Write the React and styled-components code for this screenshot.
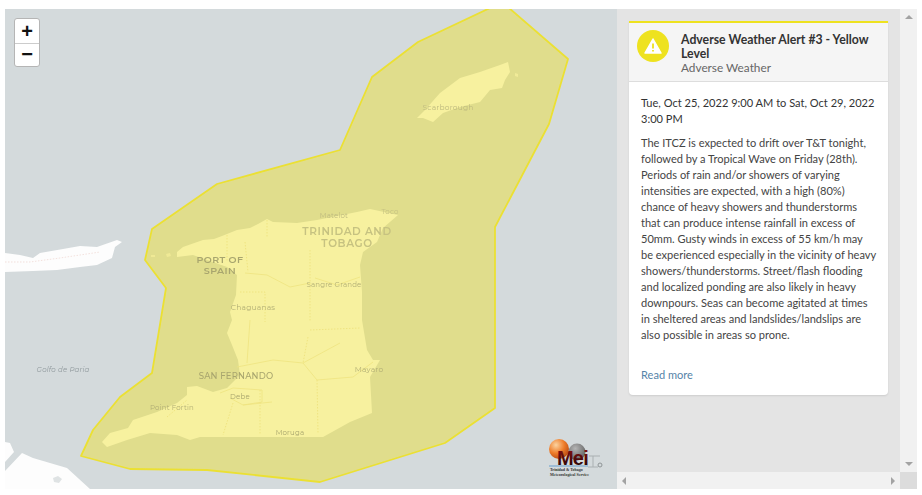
import React from 'react';
import styled, { createGlobalStyle } from 'styled-components';

const GlobalStyle = createGlobalStyle`
  html, body { margin: 0; padding: 0; background: #fff; }
  body { font-family: Lato, "Open Sans", sans-serif; overflow: hidden; }
`;

const Frame = styled.div`
  display: grid;
  grid-template-columns: 612px 300px;
  width: 912px;
  height: 480px;
  margin: 9px 0 0 5px;
`;

const MapArea = styled.div`
  position: relative;
  overflow: hidden;
  background: #d4dadc;
`;

const MapLayer = styled.svg`
  position: absolute;
  inset: 0;
  width: 612px;
  height: 480px;
  filter: blur(${p => p.$blur || 0}px);
`;

const Zoom = styled.div`
  position: absolute;
  top: 9px;
  left: 9px;
  width: 24px;
  border: 1px solid #b5b5b5;
  border-radius: 3px;
  overflow: hidden;
  background: #fff;
`;

const ZoomButton = styled.div`
  display: flex;
  align-items: center;
  justify-content: center;
  height: 24px;
  box-sizing: border-box;
  font: bold 20px "Liberation Sans", sans-serif;
  color: #111;
  & + & {
    height: 23px;
    padding-bottom: 2px;
    border-top: 1px solid #ccc;
  }
`;

const Label = styled.div`
  position: absolute;
  left: ${p => p.$x}px;
  top: ${p => p.$y}px;
  transform: translateX(-50%);
  text-align: center;
  white-space: nowrap;
  font-family: Montserrat, "Open Sans", sans-serif;
  font-size: ${p => p.$size || 8}px;
  line-height: ${p => p.$leading || (p.$size || 8) + 1}px;
  font-style: ${p => (p.$italic ? 'italic' : 'normal')};
  font-weight: ${p => p.$weight || 400};
  letter-spacing: ${p => p.$spacing || 0.2}px;
  color: ${p => p.$color || '#b9b67e'};
  filter: blur(0.25px);
`;

const LogoBox = styled.svg`
  position: absolute;
  left: 543px;
  top: 429px;
  width: 60px;
  height: 44px;
`;

const LogoWord = styled.text`
  font: 900 20px "Liberation Sans", sans-serif;
  letter-spacing: -0.8px;
`;

const LogoCaption = styled.text`
  font: bold 4px "Liberation Serif", serif;
  fill: #333;
`;

const Panel = styled.div`
  display: grid;
  grid-template-columns: 283px 17px;
  grid-template-rows: 463px 17px;
`;

const PanelBody = styled.div`
  background: #e4e4e4;
  padding: 12px 12px 0;
`;

const Card = styled.div`
  width: 259px;
  height: 374px;
  display: flex;
  flex-direction: column;
  box-sizing: border-box;
  background: #fff;
  border-top: 2px solid #eee21f;
  border-radius: 0 0 4px 4px;
  box-shadow: 0 1px 2px rgba(0, 0, 0, 0.1);
`;

const CardHeader = styled.div`
  flex: none;
  display: flex;
  gap: 12px;
  height: 59px;
  box-sizing: border-box;
  padding: 7px 8px 0;
  background: #f5f5f5;
  border-bottom: 1px solid #ddd;
`;

const AlertBadge = styled.div`
  flex: none;
  display: flex;
  align-items: center;
  justify-content: center;
  width: 32px;
  height: 32px;
  border-radius: 50%;
  background: #eee21f;
`;

const HeaderText = styled.div`
  padding-top: 3px;
  font-size: 11.8px;
  line-height: 14px;
  color: #666;
`;

const Title = styled.div`
  font-size: 12.25px;
  font-weight: 700;
  color: #333;
`;

const CardBody = styled.div`
  flex: 1;
  display: flex;
  flex-direction: column;
  padding: 13px 12px 0;
  font-size: 11.05px;
  line-height: 16px;
  color: #333;
`;

const Dates = styled.div`
  margin-bottom: 8px;
`;

const Description = styled.div`
  color: #444;
`;

const ReadMore = styled.a`
  margin-top: 24px;
  color: #5583a8;
`;

const Track = styled.div`
  display: flex;
  flex-direction: ${p => (p.$vertical ? 'column' : 'row')};
  align-items: center;
  justify-content: space-between;
  padding: ${p => (p.$vertical ? '6px 0' : '0 5px')};
  background: #f1f1f1;
`;

const Corner = styled.div`
  background: #dcdcdc;
`;

const Arrow = styled.span`
  width: 0;
  height: 0;
  border-style: solid;
  border-color: transparent;
  ${p => {
    if (p.$dir === 'up') return 'border-width: 0 4px 4px; border-bottom-color: #a3a3a3;';
    if (p.$dir === 'down') return 'border-width: 4px 4px 0; border-top-color: #a3a3a3;';
    if (p.$dir === 'left') return 'border-width: 4px 4px 4px 0; border-right-color: #a3a3a3;';
    return 'border-width: 4px 0 4px 4px; border-left-color: #a3a3a3;';
  }}
`;

// map drawings use page coordinates, the svg viewBox shifts them into the map area
const warningArea = '490,8 509,8 568,59 549,124 495,227 495,408 445,443 320,482 207,470 130,469 81,456 93,430 120,397 152,373 166,288 145,260 152,229 217,184 340,150 372,77 418,42';
const trinidad = 'M177,252 L183,247 L203,240 L214,239 L222,236 L237,230 L250,228 L258,224 L267,219 L273,222 L297,223 L317,220 L337,216 L357,212 L370,209 L398,215 L383,228 L377,242 L363,252 L360,265 L362,292 L362,320 L367,350 L373,360 L380,360 L370,377 L372,413 L350,422 L323,437 L277,437 L223,437 L200,437 L190,440 L177,435 L150,433 L127,440 L107,447 L102,442 L110,433 L128,428 L133,420 L157,412 L177,403 L187,395 L187,387 L197,386 L213,392 L227,388 L240,375 L238,360 L232,345 L227,333 L232,320 L230,312 L236,295 L237,275 L227,267 L193,255 L177,257 Z';
const tobago = 'M417,118 L425,110 L440,93 L460,78 L480,72 L500,65 L508,62 L510,72 L505,80 L502,88 L490,90 L480,102 L460,107 L443,113 L433,122 L423,118 Z';
const paria = 'M5,253 L20,255 L33,258 L40,253 L63,249 L80,246 L97,247 L117,240 L122,242 L115,247 L112,258 L97,265 L80,267 L57,270 L33,271 L5,272 Z';
const mainland = 'M5,442 L10,443 L14,452 L5,462 Z M5,471 L22,453 L33,458 L67,468 L90,489 L5,489 Z';
const solidRoads = [
  'M245,273 L267,275 L290,287 L310,283',
  'M315,278 L337,285 L360,277',
  'M250,320 L247,363',
  'M237,367 L273,360 L303,363 L340,343',
  'M303,363 L317,380 L353,377 L373,362',
  'M220,393 L233,388 L262,390 L262,402 L243,405 L230,398',
  'M243,405 L272,402',
];
const dottedRoads = [
  'M227,235 L227,262',
  'M267,220 L267,238',
  'M245,242 L248,272',
  'M310,250 L310,322',
  'M240,292 L265,292 L265,322',
  'M308,337 L303,363',
  'M310,330 L360,328',
  'M317,380 L318,433',
  'M260,390 L260,435',
  'M233,403 L223,435',
  'M167,417 L187,400',
];

const App = () => (
  <>
    <GlobalStyle />
    <Frame>
      <MapArea>
        <MapLayer viewBox="5 9 612 480" $blur={0.6}>
          <path d={paria} fill="#fdfdfd" />
          <path d={mainland} fill="#fdfdfd" />
          <path d="M53,478 l5,-2 l4,3 l-3,4 l-5,-1 Z" fill="#dfe3e4" />
          <path d={trinidad} fill="#fff" />
          <path d={tobago} fill="#fff" />
          <path d="M515,73 l3,1 l0,3 l-3,-1 Z" fill="#f4f4f2" />
          <path d="M151,255 l4,0 l0,2 l-4,0 Z M166,254 l4,-1 l1,3 l-4,1 Z" fill="#f0f0ec" />
          <path d="M5,262 H30 L60,258 L100,252" fill="none" stroke="#eccfc8" strokeWidth="0.6" strokeDasharray="1.5 1.5" />
          {solidRoads.map(d => (
            <path key={d} d={d} fill="none" stroke="#efe6c4" strokeWidth="0.8" />
          ))}
          {dottedRoads.map(d => (
            <path key={d} d={d} fill="none" stroke="#ecdfb8" strokeWidth="0.8" strokeDasharray="1.5 1.5" />
          ))}
        </MapLayer>
        <MapLayer viewBox="5 9 612 480">
          <polygon points={warningArea} fill="rgb(238,226,50)" fillOpacity="0.47" stroke="#ebe033" strokeWidth="1.8" strokeLinejoin="round" />
        </MapLayer>
        <Label $x={443} $y={95} $size={7.5} $color="#bdb97f">Scarborough</Label>
        <Label $x={329} $y={203} $size={7} $color="#bdb97f">Matelot</Label>
        <Label $x={385} $y={199} $size={7} $color="#c6c281">Toco</Label>
        <Label $x={342} $y={217} $size={10.5} $leading={12.3} $color="#c6c281" $weight={600} $spacing={0.6}>TRINIDAD AND<br />TOBAGO</Label>
        <Label $x={215} $y={245} $size={9.5} $leading={11} $color="#a8a56e" $weight={600} $spacing={0.4}>PORT OF<br />SPAIN</Label>
        <Label $x={329} $y={272} $size={7} $color="#b1ae75">Sangre Grande</Label>
        <Label $x={248} $y={295} $size={7.5} $color="#b1ae75">Chaguanas</Label>
        <Label $x={58} $y={357} $size={7} $color="#8f989c" $italic>Golfo de Paria</Label>
        <Label $x={231} $y={363} $size={8.5} $color="#a8a56e" $weight={500}>SAN FERNANDO</Label>
        <Label $x={235} $y={384} $size={7} $color="#a8a56e">Debe</Label>
        <Label $x={167} $y={395} $size={7} $color="#b1ae75">Point Fortin</Label>
        <Label $x={285} $y={420} $size={7} $color="#a8a56e">Moruga</Label>
        <Label $x={364} $y={357} $size={7.5} $color="#b1ae75">Mayaro</Label>
        <Zoom>
          <ZoomButton>+</ZoomButton>
          <ZoomButton>−</ZoomButton>
        </Zoom>
        <LogoBox viewBox="0 0 60 44">
          <defs>
            <radialGradient id="orangeBall" cx="35%" cy="30%" r="75%">
              <stop offset="0%" stopColor="#fbd3a0" />
              <stop offset="55%" stopColor="#ee7d2a" />
              <stop offset="100%" stopColor="#b84a12" />
            </radialGradient>
            <radialGradient id="greyBall" cx="40%" cy="30%" r="75%">
              <stop offset="0%" stopColor="#b5b5b5" />
              <stop offset="100%" stopColor="#5d5d5d" />
            </radialGradient>
            <linearGradient id="meiFill" x1="0" y1="0" x2="0" y2="1">
              <stop offset="0%" stopColor="#8e1010" />
              <stop offset="100%" stopColor="#1c0505" />
            </linearGradient>
          </defs>
          <circle cx="11" cy="11" r="10" fill="url(#orangeBall)" />
          <circle cx="29" cy="14" r="8.5" fill="url(#greyBall)" />
          <LogoWord x="9" y="27" fill="url(#meiFill)">Mei</LogoWord>
          <path d="M41,18 h11 M45,18 v11 M40,29 h10" stroke="#aab0b2" strokeWidth="1" fill="none" />
          <circle cx="52" cy="27" r="2" fill="none" stroke="#8f9597" strokeWidth="1" />
          <path d="M1,28 H40" stroke="#4f93c9" strokeWidth="0.8" />
          <LogoCaption x="2" y="33">Trinidad &amp; Tobago</LogoCaption>
          <LogoCaption x="2" y="38">Meteorological Service</LogoCaption>
        </LogoBox>
      </MapArea>
      <Panel>
        <PanelBody>
          <Card>
            <CardHeader>
              <AlertBadge>
                <svg width="18" height="16" viewBox="0 0 18 16">
                  <path d="M9,1 L17,15 H1 Z" fill="#fff" stroke="#fff" strokeWidth="1.5" strokeLinejoin="round" />
                  <path d="M9,5.5 V10.5 M9,12 V13.6" stroke="#eee21f" strokeWidth="1.8" />
                </svg>
              </AlertBadge>
              <HeaderText>
                <Title>Adverse Weather Alert #3 - Yellow Level</Title>
                Adverse Weather
              </HeaderText>
            </CardHeader>
            <CardBody>
              <Dates>Tue, Oct 25, 2022 9:00 AM to Sat, Oct 29, 2022 3:00 PM</Dates>
              <Description>
                The ITCZ is expected to drift over T&amp;T tonight, followed by a Tropical Wave on Friday (28th). Periods of rain and/or showers of varying intensities are expected, with a high (80%) chance of heavy showers and thunderstorms that can produce intense rainfall in excess of 50mm. Gusty winds in excess of 55 km/h may be experienced especially in the vicinity of heavy showers/thunderstorms. Street/flash flooding and localized ponding are also likely in heavy downpours. Seas can become agitated at times in sheltered areas and landslides/landslips are also possible in areas so prone.
              </Description>
              <ReadMore>Read more</ReadMore>
            </CardBody>
          </Card>
        </PanelBody>
        <Track $vertical>
          <Arrow $dir="up" />
          <Arrow $dir="down" />
        </Track>
        <Track>
          <Arrow $dir="left" />
          <Arrow $dir="right" />
        </Track>
        <Corner />
      </Panel>
    </Frame>
  </>
);

export default App;
